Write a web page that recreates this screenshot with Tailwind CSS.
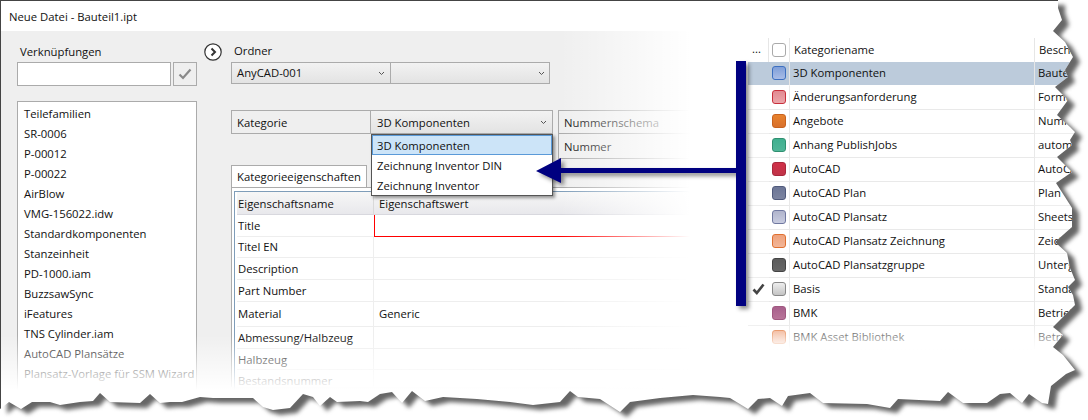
<!DOCTYPE html>
<html lang="de">
<head>
<meta charset="utf-8">
<script src="https://cdn.jsdelivr.net/npm/@tailwindcss/browser@4"></script>
<title>Neue Datei</title>
</head>
<body class="bg-white">
<div class="relative w-[1088px] h-[420px] overflow-hidden bg-white text-[11.3px] leading-[16px] text-[#111] font-['Open_Sans','Noto_Sans',sans-serif]">
  <div class="flex items-center h-[31px] pl-[8px] pt-[1px] border-t border-l border-[#444] bg-white">Neue Datei - Bauteil1.ipt</div>
  <div class="flex h-[389px]">
    <!-- dialog -->
    <div class="flex w-[690px] shrink-0 pl-[17px] bg-[#efefef] border-l border-[#444] -ml-0">
      <div class="w-[180px] -ml-[1px] shrink-0 pt-[12px]">
        <div class="h-[18px] pl-[3px] mb-[1px] flex items-center">Verknüpfungen</div>
        <div class="flex gap-[2px] h-[24px]">
          <div class="w-[154px] border border-[#ababab] bg-white"></div>
          <div class="w-[24px] border border-[#ababab] flex items-center justify-center">
            <svg width="14" height="12" viewBox="0 0 14 12" fill="none"><path d="M1.5 6.5 L5 10 L12.5 1.5" stroke="#8a8a8a" stroke-width="2.2"/></svg>
          </div>
        </div>
        <div class="mt-[15px] h-[300px] border border-[#ababab] bg-white pt-[2px] pl-[6px] whitespace-nowrap overflow-hidden">
          <div class="h-[20px] flex items-center">Teilefamilien</div>
          <div class="h-[20px] flex items-center">SR-0006</div>
          <div class="h-[20px] flex items-center">P-00012</div>
          <div class="h-[20px] flex items-center">P-00022</div>
          <div class="h-[20px] flex items-center">AirBlow</div>
          <div class="h-[20px] flex items-center">VMG-156022.idw</div>
          <div class="h-[20px] flex items-center">Standardkomponenten</div>
          <div class="h-[20px] flex items-center">Stanzeinheit</div>
          <div class="h-[20px] flex items-center">PD-1000.iam</div>
          <div class="h-[20px] flex items-center">BuzzsawSync</div>
          <div class="h-[20px] flex items-center">iFeatures</div>
          <div class="h-[20px] flex items-center">TNS Cylinder.iam</div>
          <div class="h-[20px] flex items-center">AutoCAD Plansätze</div>
          <div class="h-[20px] flex items-center">Plansatz-Vorlage für SSM Wizard</div>
        </div>
      </div>
      <div class="w-[34px] shrink-0 pl-[7px] pt-[12px]">
        <svg width="18" height="18" viewBox="0 0 18 18" fill="none"><circle cx="9" cy="9" r="8.2" fill="#fff" stroke="#333" stroke-width="1.2"/><path d="M7.5 5.5 L11 9 L7.5 12.5" stroke="#333" stroke-width="2"/></svg>
      </div>
      <div class="flex-1 pt-[10px] min-w-0">
        <div class="h-[18px] pl-[3px] pt-[1px] flex items-center">Ordner</div>
        <div class="mt-[3px] flex w-[319px] h-[22px] border border-[#ababab] bg-linear-to-b from-[#f2f2f2] to-[#e3e3e3]">
          <div class="w-[159px] border-r border-[#ababab] pl-[5px] flex items-center justify-between pr-[5px]">AnyCAD-001
            <svg width="7" height="5" viewBox="0 0 7 5" fill="none"><path d="M1 1 L3.5 3.5 L6 1" stroke="#555" stroke-width="1"/></svg>
          </div>
          <div class="flex-1 flex items-center justify-end pr-[4px]">
            <svg width="7" height="5" viewBox="0 0 7 5" fill="none"><path d="M1 1 L3.5 3.5 L6 1" stroke="#555" stroke-width="1"/></svg>
          </div>
        </div>
        <div class="mt-[26px] flex h-[24px]">
          <div class="w-[139px] border border-[#ababab] border-r-0 pl-[5px] pt-[1px] flex items-center">Kategorie</div>
          <div class="w-[183px] border border-[#ababab] pl-[6px] pr-[5px] pt-[1px] flex items-center justify-between bg-linear-to-b from-[#f2f2f2] to-[#e3e3e3]">3D Komponenten
            <svg width="7" height="5" viewBox="0 0 7 5" fill="none"><path d="M1 1 L3.5 3.5 L6 1" stroke="#555" stroke-width="1"/></svg>
          </div>
          <div class="ml-[5px] flex-1 border border-[#ababab] border-r-0 pl-[5px] pt-[1px] flex items-center">Nummernschema</div>
        </div>
        <div class="flex justify-end h-[25px]">
          <div class="w-[132px] border-l border-b border-[#ababab] pl-[5px] pt-[1px] flex items-center">Nummer</div>
        </div>
        <div class="mt-[6px] w-[136px] h-[22px] bg-white border border-b-0 border-[#ababab] pl-[5px] pt-[1px] flex items-center whitespace-nowrap overflow-hidden">Kategorieeigenschaften</div>
        <div class="h-[200px] bg-white border-l border-t border-[#ababab] pl-[2px] pt-[3px]">
          <div class="border-l border-t border-[#7f9db9] pl-[2px]">
            <div class="flex h-[23px] pt-[1px] border-b border-[#d8d8de] bg-linear-to-b from-[#f7f7f7] to-[#e8e8ec]">
              <div class="w-[137px] pl-[1px] border-r border-[#d9d9d9] flex items-center">Eigenschaftsname</div>
              <div class="flex-1 pl-[5px] flex items-center">Eigenschaftswert</div>
            </div>
            <div class="flex h-[22px]"><div class="w-[137px] pl-[1px] border-b border-[#eee] flex items-center">Title</div><div class="flex-1 border-l border-b border-[#ff0000]"></div></div>
            <div class="flex h-[21px] border-b border-[#eee]"><div class="w-[137px] pl-[1px] border-r border-[#eee] flex items-center">Titel EN</div></div>
            <div class="flex h-[22px] border-b border-[#eee]"><div class="w-[137px] pl-[1px] pt-[1px] border-r border-[#eee] flex items-center">Description</div></div>
            <div class="flex h-[22px] border-b border-[#eee]"><div class="w-[137px] pl-[1px] pt-[1px] border-r border-[#eee] flex items-center">Part Number</div></div>
            <div class="flex h-[25px] border-b border-[#eee]"><div class="w-[137px] pl-[1px] pb-[1px] border-r border-[#eee] flex items-center">Material</div><div class="pl-[5px] pb-[1px] flex items-center">Generic</div></div>
            <div class="flex h-[22px] border-b border-[#eee]"><div class="w-[137px] pl-[1px] pt-[1px] border-r border-[#eee] flex items-center">Abmessung/Halbzeug</div></div>
            <div class="flex h-[21px] border-b border-[#eee]"><div class="w-[137px] pl-[1px] pt-[1px] border-r border-[#eee] flex items-center">Halbzeug</div></div>
            <div class="flex h-[21px] border-b border-[#eee]"><div class="w-[137px] pl-[1px] pt-[1px] border-r border-[#eee] flex items-center">Bestandsnummer</div></div>
          </div>
        </div>
      </div>
    </div>
    <!-- category table -->
    <div class="flex-1 pl-[58px] pt-[7px] min-w-0 overflow-hidden whitespace-nowrap">
      <div class="grid grid-cols-[21px_21px_245px_60px] grid-rows-[24px_repeat(12,24px)] w-[347px] [&>div:nth-child(n+5)]:pb-[1px]">
        <div class="border-r border-[#e6e6e6] flex items-center pl-[4px] pb-[2px]">...</div>
        <div class="border-r border-[#e6e6e6] flex items-center justify-center"><span class="w-[14px] h-[14px] rounded-[3px] border border-[#aaa] bg-white"></span></div>
        <div class="border-r border-[#e6e6e6] flex items-center pl-[4px]">Kategoriename</div>
        <div class="flex items-center pl-[4px]">Beschreibung</div>

        <div class="border-b border-white bg-[#bccbdb]"></div>
        <div class="border-b border-white border-r border-r-[#e6e6e6] bg-[#bccbdb] flex items-center justify-center"><span class="w-[14px] h-[14px] rounded-[3px] border border-[#3c6fc0] bg-linear-to-b from-[#7f9fd8] to-[#a9bde6]"></span></div>
        <div class="border-b border-white border-r border-r-[#e6e6e6] bg-[#bccbdb] flex items-center pl-[3px]">3D Komponenten</div>
        <div class="border-b border-white bg-[#bccbdb] flex items-center pl-[3px]">Bauteile</div>

        <div class="border-b border-[#eee]"></div>
        <div class="border-b border-r border-[#e9e9e9] flex items-center justify-center"><span class="w-[14px] h-[14px] rounded-[3px] border border-[#c8303c] bg-linear-to-b from-[#e28a92] to-[#eba6aa]"></span></div>
        <div class="border-b border-r border-[#e9e9e9] flex items-center pl-[3px]">Änderungsanforderung</div>
        <div class="border-b border-[#eee] flex items-center pl-[3px]">Formular</div>

        <div class="border-b border-[#eee]"></div>
        <div class="border-b border-r border-[#e9e9e9] flex items-center justify-center"><span class="w-[14px] h-[14px] rounded-[3px] border border-[#c8621e] bg-linear-to-b from-[#e8822c] to-[#d8702c]"></span></div>
        <div class="border-b border-r border-[#e9e9e9] flex items-center pl-[3px]">Angebote</div>
        <div class="border-b border-[#eee] flex items-center pl-[3px]">Nummer</div>

        <div class="border-b border-[#eee]"></div>
        <div class="border-b border-r border-[#e9e9e9] flex items-center justify-center"><span class="w-[14px] h-[14px] rounded-[3px] border border-[#2f8f70] bg-linear-to-b from-[#3fb08f] to-[#50b698]"></span></div>
        <div class="border-b border-r border-[#e9e9e9] flex items-center pl-[3px]">Anhang PublishJobs</div>
        <div class="border-b border-[#eee] flex items-center pl-[3px]">automatisch</div>

        <div class="border-b border-[#eee]"></div>
        <div class="border-b border-r border-[#e9e9e9] flex items-center justify-center"><span class="w-[14px] h-[14px] rounded-[3px] border border-[#a8283c] bg-linear-to-b from-[#d03048] to-[#c03448]"></span></div>
        <div class="border-b border-r border-[#e9e9e9] flex items-center pl-[3px]">AutoCAD</div>
        <div class="border-b border-[#eee] flex items-center pl-[3px]">AutoCAD</div>

        <div class="border-b border-[#eee]"></div>
        <div class="border-b border-r border-[#e9e9e9] flex items-center justify-center"><span class="w-[14px] h-[14px] rounded-[3px] border border-[#505a7c] bg-linear-to-b from-[#6c7696] to-[#7c84a0]"></span></div>
        <div class="border-b border-r border-[#e9e9e9] flex items-center pl-[3px]">AutoCAD Plan</div>
        <div class="border-b border-[#eee] flex items-center pl-[3px]">Plan</div>

        <div class="border-b border-[#eee]"></div>
        <div class="border-b border-r border-[#e9e9e9] flex items-center justify-center"><span class="w-[14px] h-[14px] rounded-[3px] border border-[#7078a0] bg-linear-to-b from-[#b0b4cc] to-[#c8cce0]"></span></div>
        <div class="border-b border-r border-[#e9e9e9] flex items-center pl-[3px]">AutoCAD Plansatz</div>
        <div class="border-b border-[#eee] flex items-center pl-[3px]">Sheetset</div>

        <div class="border-b border-[#eee]"></div>
        <div class="border-b border-r border-[#e9e9e9] flex items-center justify-center"><span class="w-[14px] h-[14px] rounded-[3px] border border-[#e07030] bg-linear-to-b from-[#eea27c] to-[#f2b698]"></span></div>
        <div class="border-b border-r border-[#e9e9e9] flex items-center pl-[3px]">AutoCAD Plansatz Zeichnung</div>
        <div class="border-b border-[#eee] flex items-center pl-[3px]">Zeichnung</div>

        <div class="border-b border-[#eee]"></div>
        <div class="border-b border-r border-[#e9e9e9] flex items-center justify-center"><span class="w-[14px] h-[14px] rounded-[3px] border border-[#444] bg-linear-to-b from-[#5c5c5c] to-[#666]"></span></div>
        <div class="border-b border-r border-[#e9e9e9] flex items-center pl-[3px]">AutoCAD Plansatzgruppe</div>
        <div class="border-b border-[#eee] flex items-center pl-[3px]">Untergruppe</div>

        <div class="border-b border-[#eee] flex items-center justify-center">
          <svg width="13" height="12" viewBox="0 0 13 12" fill="none"><path d="M1.5 6.5 L4.8 10 L11.5 1.5" stroke="#444" stroke-width="2.6"/></svg>
        </div>
        <div class="border-b border-r border-[#e9e9e9] flex items-center justify-center"><span class="w-[14px] h-[14px] rounded-[3px] border border-[#888] bg-linear-to-b from-[#eee] to-[#c4c4c4]"></span></div>
        <div class="border-b border-r border-[#e9e9e9] flex items-center pl-[3px]">Basis</div>
        <div class="border-b border-[#eee] flex items-center pl-[3px]">Standard</div>

        <div class="border-b border-[#eee]"></div>
        <div class="border-b border-r border-[#e9e9e9] flex items-center justify-center"><span class="w-[14px] h-[14px] rounded-[3px] border border-[#a05880] bg-linear-to-b from-[#a8608c] to-[#b87498]"></span></div>
        <div class="border-b border-r border-[#e9e9e9] flex items-center pl-[3px]">BMK</div>
        <div class="border-b border-[#eee] flex items-center pl-[3px]">Betriebsmittel</div>

        <div class="border-b border-[#eee]"></div>
        <div class="border-b border-r border-[#e9e9e9] flex items-center justify-center"><span class="w-[14px] h-[14px] rounded-[3px] border border-[#e07030] bg-linear-to-b from-[#eea27c] to-[#f2b698]"></span></div>
        <div class="border-b border-r border-[#e9e9e9] flex items-center pl-[3px]">BMK Asset Bibliothek</div>
        <div class="border-b border-[#eee] flex items-center pl-[3px]">Betriebsmittel</div>
      </div>
    </div>
  </div>

  <!-- open dropdown -->
  <div class="absolute left-[371px] top-[134px] w-[182px] h-[62px] bg-white border border-[#555] shadow-[2px_2px_3px_rgba(0,0,0,0.4)]">
    <div class="h-[20px] pl-[4px] pt-[1px] flex items-center bg-[#cce4f8] border border-[#5a9ad8]">3D Komponenten</div>
    <div class="h-[20px] pl-[5px] pt-[1px] flex items-center">Zeichnung Inventor DIN</div>
    <div class="h-[20px] pl-[5px] pt-[1px] flex items-center">Zeichnung Inventor</div>
  </div>

  <!-- fades -->
  <div class="absolute left-[560px] top-[31px] w-[130px] h-[389px] bg-linear-to-r from-white/0 to-white"></div>
  <div class="absolute left-0 top-[335px] w-[690px] h-[55px] bg-linear-to-b from-white/0 to-white"></div>
  <div class="absolute left-0 top-[390px] w-[690px] h-[30px] bg-white"></div>
  <div class="absolute left-[748px] top-[322px] w-[340px] h-[28px] bg-linear-to-b from-white/0 to-white"></div>
  <div class="absolute left-[748px] top-[350px] w-[340px] h-[70px] bg-white"></div>
  <div class="absolute left-0 top-[31px] w-[1px] h-[378px] bg-[#444]"></div>

  <!-- annotation arrow -->
  <svg class="absolute left-0 top-0 drop-shadow-[3px_3px_2px_rgba(0,0,0,0.45)]" width="1088" height="420" viewBox="0 0 1088 420">
    <path d="M736 61 H746 V306 H736 V173 H561 V183 L536 171 L561 158 V168 H736 Z" fill="#000080"/>
  </svg>

  <!-- torn edge -->
  <svg class="absolute left-0 top-0" width="1088" height="420" viewBox="0 0 1088 420">
    <defs>
      <clipPath id="outside">
        <path clip-rule="evenodd" d="M0 0H1088V420H0Z M0 0 L1058 0 1058 8 1062 20 1053 31 1065 42 1073 57 1065 70 1068 77 1055 87 1068 100 1057 115 1070 127 1075 132 1070 140 1072 145 1057 157 1072 172 1056 183 1065 197 1072 208 1072 227 1055 242 1067 253 1070 268 1075 280 1068 287 1073 295 1075 305 1053 327 1063 335 1053 347 1063 355 1075 370 1066 374 1051 386 1048 404 1042 403 1029 394 1022 403 1010 393 1000 394 987 403 963 403 948 392 940 401 898 399 890 408 867 404 823 403 810 393 788 396 782 406 770 398 758 399 748 409 730 398 720 397 693 395 660 398 630 402 620 412 600 399 578 397 570 391 560 402 533 405 510 402 477 399 443 397 425 401 412 391 402 403 392 392 380 394 368 402 360 401 337 402 330 397 320 406 313 397 303 394 290 408 273 410 263 407 253 398 213 398 200 397 182 402 170 402 160 403 150 394 140 403 110 402 100 393 93 401 80 402 60 405 50 402 32 402 21 409 9 402 0 409 Z"/>
      </clipPath>
    </defs>
    <path fill="#fff" fill-rule="evenodd" d="M0 0H1088V420H0Z M0 0 L1058 0 1058 8 1062 20 1053 31 1065 42 1073 57 1065 70 1068 77 1055 87 1068 100 1057 115 1070 127 1075 132 1070 140 1072 145 1057 157 1072 172 1056 183 1065 197 1072 208 1072 227 1055 242 1067 253 1070 268 1075 280 1068 287 1073 295 1075 305 1053 327 1063 335 1053 347 1063 355 1075 370 1066 374 1051 386 1048 404 1042 403 1029 394 1022 403 1010 393 1000 394 987 403 963 403 948 392 940 401 898 399 890 408 867 404 823 403 810 393 788 396 782 406 770 398 758 399 748 409 730 398 720 397 693 395 660 398 630 402 620 412 600 399 578 397 570 391 560 402 533 405 510 402 477 399 443 397 425 401 412 391 402 403 392 392 380 394 368 402 360 401 337 402 330 397 320 406 313 397 303 394 290 408 273 410 263 407 253 398 213 398 200 397 182 402 170 402 160 403 150 394 140 403 110 402 100 393 93 401 80 402 60 405 50 402 32 402 21 409 9 402 0 409 Z"/>
    <g clip-path="url(#outside)">
      <polygon class="blur-[2px]" transform="translate(7 5)" fill="#666" points="0,0 1058,0 1058,8 1062,20 1053,31 1065,42 1073,57 1065,70 1068,77 1055,87 1068,100 1057,115 1070,127 1075,132 1070,140 1072,145 1057,157 1072,172 1056,183 1065,197 1072,208 1072,227 1055,242 1067,253 1070,268 1075,280 1068,287 1073,295 1075,305 1053,327 1063,335 1053,347 1063,355 1075,370 1066,374 1051,386 1048,404 1042,403 1029,394 1022,403 1010,393 1000,394 987,403 963,403 948,392 940,401 898,399 890,408 867,404 823,403 810,393 788,396 782,406 770,398 758,399 748,409 730,398 720,397 693,395 660,398 630,402 620,412 600,399 578,397 570,391 560,402 533,405 510,402 477,399 443,397 425,401 412,391 402,403 392,392 380,394 368,402 360,401 337,402 330,397 320,406 313,397 303,394 290,408 273,410 263,407 253,398 213,398 200,397 182,402 170,402 160,403 150,394 140,403 110,402 100,393 93,401 80,402 60,405 50,402 32,402 21,409 9,402 0,409"/>
    </g>
    <rect x="0" y="0" width="1058" height="1" fill="#444"/>
  </svg>
</div>
</body>
</html>
